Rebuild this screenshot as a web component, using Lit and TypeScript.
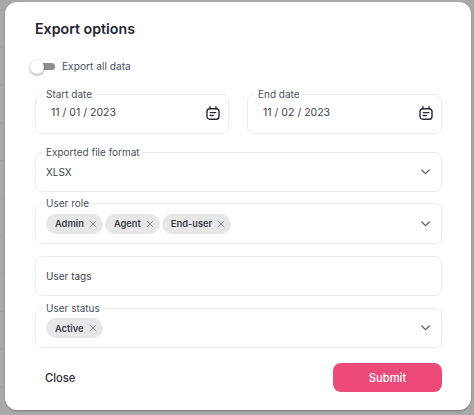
import { LitElement, html, css, svg } from "lit";
import { customElement } from "lit/decorators.js";

const calIcon = html`<svg class="cal" viewBox="0 0 14 14" width="14" height="14" fill="none" stroke="#262a35" stroke-width="1.4" stroke-linecap="round">
  <rect x="1" y="2.7" width="12" height="10.5" rx="2.8"></rect>
  <path d="M4 .8v1.9M10 .8v1.9M4.2 6.6h5.6M4.2 9.5h3"></path>
</svg>`;
const chevron = html`<svg class="chev" viewBox="0 0 9 6" width="9" height="6" fill="none" stroke="#555b66" stroke-width="1.2" stroke-linecap="round" stroke-linejoin="round"><path d="M.8 1l3.7 3.6L8.200 1"></path></svg>`;
const closeX = svg`<path d="M.8 .8l6.400 6.400M7.200 .8l-6.400 6.400"></path>`;

@customElement("app-root")
export class AppRoot extends LitElement {
  static styles = css`
    :host {
      display: block;
      width: 474px;
      height: 415px;
      overflow: hidden;
      background-color: #a9a9a9;
      font-family: "Inter", "Liberation Sans", sans-serif;
      color: #3d4250;
    }
    .backdrop {
      height: 100%;
      box-sizing: border-box;
      padding: 2px 3px 5px 5px;
      background-image: linear-gradient(
        to bottom,
        transparent 0,
        transparent 37px,
        #a1a1a1 37px,
        #a1a1a1 37.75px
      );
      background-size: 100% 37.75px;
      background-position: 0 10px;
    }
    .dialog {
      height: 100%;
      box-sizing: border-box;
      background: #fff;
      border-radius: 12px;
      box-shadow: 0 1px 2px rgba(0, 0, 0, 0.3);
      padding: 17px 29px 0 30px;
      display: flex;
      flex-direction: column;
    }
    h2 {
      margin: 0;
      font-size: 14.2px;
      line-height: 20px;
      font-weight: 600;
      color: #1f2430;
    }
    .toggle-row {
      display: flex;
      align-items: center;
      gap: 7px;
      margin: 17px 0 0 -5px;
      height: 20px;
      font-size: 10.2px;
      color: #4a4f5c;
    }
    .toggle {
      position: relative;
      width: 25px;
      height: 7px;
      flex: none;
    }
    .track {
      position: absolute;
      left: 6px;
      right: 0;
      top: 0;
      bottom: 0;
      background: #8e8e8e;
      border-radius: 4px;
    }
    .thumb {
      position: absolute;
      left: 0;
      top: -3px;
      width: 14px;
      height: 14px;
      border-radius: 50%;
      background: #fff;
      box-shadow: 0 1px 3px rgba(0, 0, 0, 0.4);
    }
    .dates {
      display: grid;
      grid-template-columns: 194px 195px;
      justify-content: space-between;
      margin-top: 18px;
    }
    .field {
      position: relative;
      box-sizing: border-box;
      height: 40px;
      border: 1px solid #ececf0;
      border-radius: 7px;
      padding: 0 11px 0 10px;
      display: flex;
      align-items: center;
      justify-content: space-between;
      font-size: 10px;
      color: #3d4250;
    }
    .label {
      position: absolute;
      left: 7px;
      top: -7px;
      padding: 0 3px;
      background: #fff;
      font-size: 10px;
      line-height: 12px;
      color: #4a4f5c;
    }
    .date-field {
      padding: 0 8px 3px 15px;
    }
    .date {
      display: flex;
      gap: 3px;
      font-size: 10.5px;
    }
    .role {
      height: 41px;
      margin-top: 11px;
    }
    .row {
      margin-top: 12px;
    }
    .format {
      margin-top: 18px;
    }
    .chips {
      display: flex;
      gap: 2px;
    }
    .chip {
      display: inline-flex;
      align-items: center;
      gap: 5px;
      height: 20px;
      padding: 0 6px 0 9px;
      border-radius: 10px;
      background: #e7e7e7;
      font-size: 9.300px;
      font-weight: 600;
      color: #3a3e49;
    }
    .chip svg {
      stroke: #8a8d94;
      stroke-width: 0.9;
      fill: none;
    }
    .actions {
      display: flex;
      justify-content: space-between;
      align-items: center;
      margin-top: 15px;
    }
    button {
      font: inherit;
      border: 0;
      background: none;
      cursor: pointer;
    }
    .close {
      padding: 0 0 0 10px;
      font-size: 11.2px;
      font-weight: 500;
      color: #2a2e38;
    }
    .submit {
      width: 109px;
      height: 29px;
      border-radius: 8px;
      background: #ec4a78;
      color: #fff;
      font-size: 11.2px;
      font-weight: 500;
    }
  `;

  private chip(label: string) {
    return html`<span class="chip">${label}<svg viewBox="0 0 8 8" width="8" height="8">${closeX}</svg></span>`;
  }

  private date(label: string, m: string, d: string, y: string) {
    return html`<div class="field date-field">
      <span class="label">${label}</span>
      <span class="date"><span>${m}</span><span>/</span><span>${d}</span><span>/</span><span>${y}</span></span>
      ${calIcon}
    </div>`;
  }

  render() {
    return html`<div class="backdrop">
      <div class="dialog">
        <h2>Export options</h2>
        <div class="toggle-row">
          <span class="toggle"><span class="track"></span><span class="thumb"></span></span>
          <span>Export all data</span>
        </div>
        <div class="dates">
          ${this.date("Start date", "11", "01", "2023")}
          ${this.date("End date", "11", "02", "2023")}
        </div>
        <div class="field format">
          <span class="label">Exported file format</span>
          <span>XLSX</span>
          ${chevron}
        </div>
        <div class="field role">
          <span class="label">User role</span>
          <span class="chips">${this.chip("Admin")}${this.chip("Agent")}${this.chip("End-user")}</span>
          ${chevron}
        </div>
        <div class="field row">User tags</div>
        <div class="field row">
          <span class="label">User status</span>
          <span class="chips">${this.chip("Active")}</span>
          ${chevron}
        </div>
        <div class="actions">
          <button class="close">Close</button>
          <button class="submit">Submit</button>
        </div>
      </div>
    </div>`;
  }
}
